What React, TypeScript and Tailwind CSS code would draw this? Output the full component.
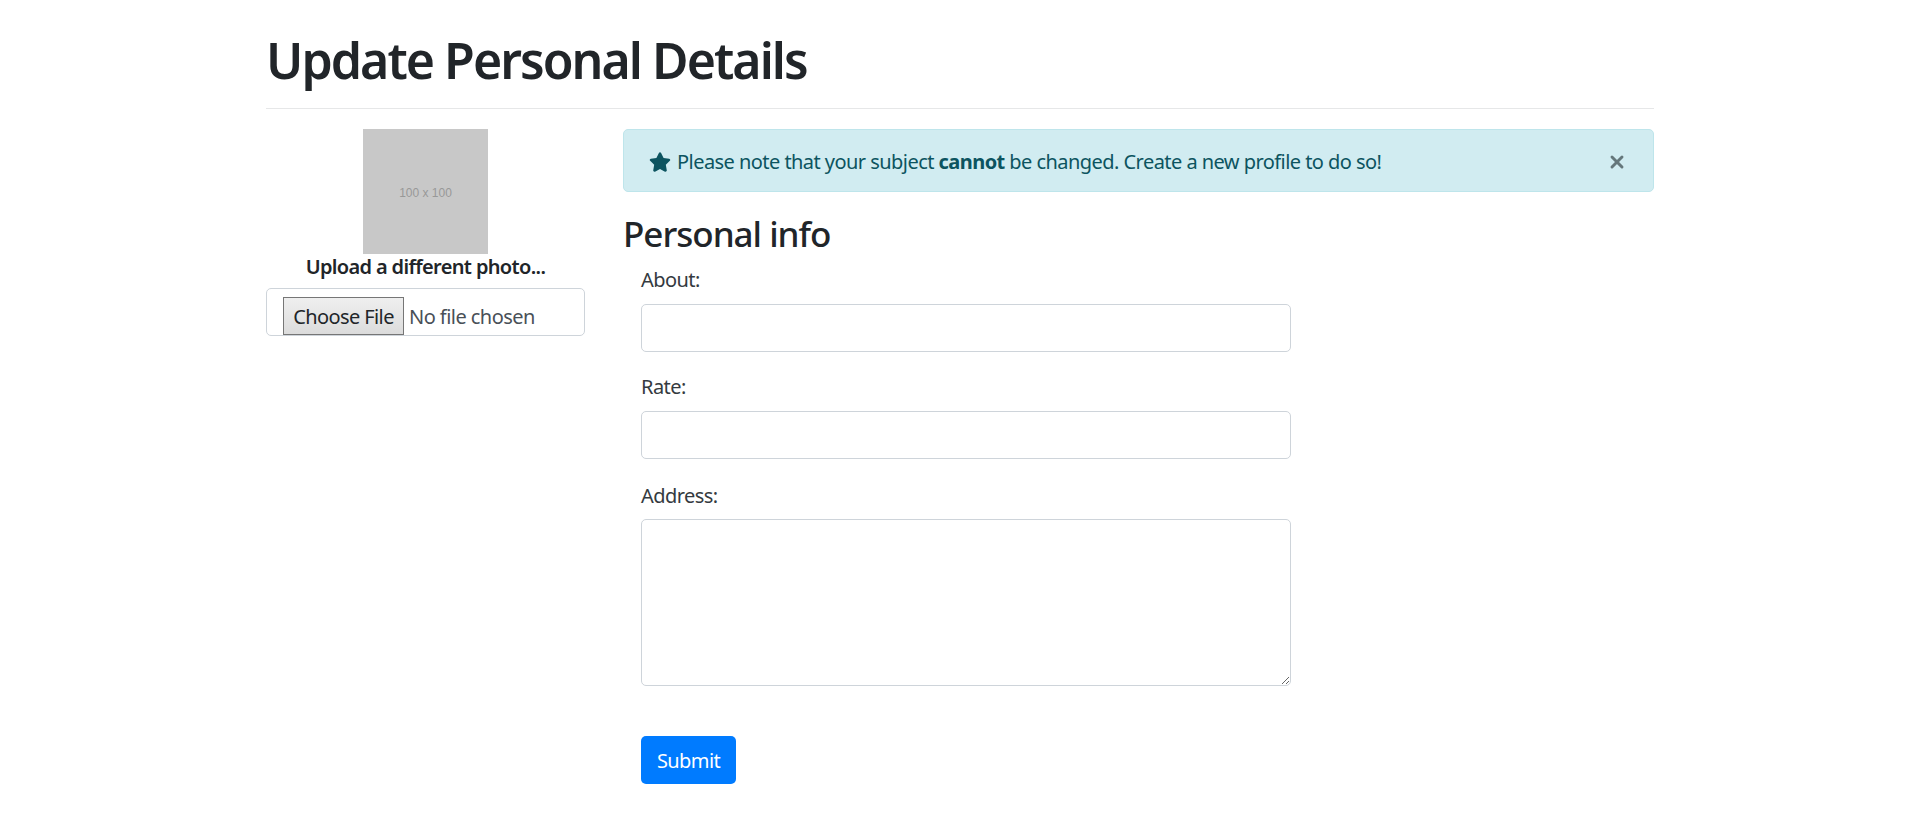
import { X } from "lucide-react";

const Star = () => (
  <svg viewBox="0 0 576 512" className="h-[20px] w-[22px] shrink-0 fill-current">
    <path d="M259.3 17.8L194 150.2 47.9 171.5c-26.2 3.8-36.7 36.1-17.7 54.6l105.7 103-25 145.5c-4.5 26.3 23.2 46 46.4 33.7L288 439.6l130.7 68.7c23.2 12.2 50.9-7.4 46.4-33.7l-25-145.5 105.7-103c19-18.5 8.5-50.8-17.7-54.6L382 150.2 316.7 17.8c-11.7-23.6-45.6-23.9-57.4 0z" />
  </svg>
);

const fieldClass =
  "block w-full rounded-[5px] border border-[#ced4da] bg-white outline-none";

export default function App() {
  return (
    <div className="min-h-[817px] bg-white font-['Noto_Sans',sans-serif] text-[20px] leading-[30px] text-[#212529]">
      <div className="mx-auto w-[1388px]">
        <h1 className="h-[108px] pt-[30px] text-[50px] leading-[60px] font-semibold tracking-[-1.95px]">
          Update Personal Details
        </h1>
        <hr className="border-[#e6e7e8]" />

        <div className="mt-[20px] flex">
          <div className="flex w-[319px] shrink-0 flex-col items-center">
            <div className="flex h-[125px] w-[125px] items-center justify-center bg-[#c8c8c8] pt-[2px] font-['Liberation_Sans',sans-serif] text-[12px] text-[#989898]">
              100 x 100
            </div>
            <h6 className="mt-[1px] text-[20px] leading-[24px] font-semibold tracking-[-0.65px]">
              Upload a different photo...
            </h6>
            <div className="mt-[9px] flex h-[48px] w-full items-center rounded-[5px] border border-[#ced4da] pt-[8px] pl-[16px] text-[#495057]">
              <button className="h-[38px] w-[121px] border border-[#767676] bg-gradient-to-b from-[#efefef] to-[#dcdcdc] pt-[1px] text-[20px] leading-none tracking-[-0.6px] text-[#212529]">
                Choose File
              </button>
              <span className="ml-[5px] pt-[1px] tracking-[-0.55px]">No file chosen</span>
            </div>
          </div>

          <div className="ml-[38px] flex-1">
            <div className="flex h-[63px] items-center justify-between rounded-[5px] border border-[#bee5eb] bg-[#d1ecf1] pr-[26px] pl-[25px] text-[#0c5460]">
              <p className="flex items-center gap-[6px] pt-[2px] tracking-[-0.55px]">
                <Star />
                <span>
                  Please note that your subject <strong>cannot</strong> be changed. Create a new profile to do so!
                </span>
              </p>
              <X className="mt-[3px] h-[20px] w-[20px] text-[#65777b]" strokeWidth={3.5} />
            </div>

            <h3 className="mt-[21px] text-[35px] leading-[42px] font-medium tracking-[-1px]">
              Personal info
            </h3>

            <form className="mt-[10px] w-[668px] pl-[18px] text-[#343a40]">
              <label className="block leading-[30px] tracking-[-0.55px]">About:</label>
              <input className={`mt-[9px] h-[48px] ${fieldClass}`} />
              <label className="mt-[20px] block leading-[30px] tracking-[-0.55px]">Rate:</label>
              <input className={`mt-[9px] h-[48px] ${fieldClass}`} />
              <label className="mt-[22px] block leading-[30px] tracking-[-0.55px]">Address:</label>
              <textarea className={`mt-[8px] h-[167px] ${fieldClass}`} />
              <button
                type="button"
                className="mt-[50px] h-[48px] w-[95px] rounded-[5px] bg-[#007bff] pt-[1px] text-[20px] tracking-[-0.6px] text-white"
              >
                Submit
              </button>
            </form>
          </div>
        </div>
      </div>
    </div>
  );
}
